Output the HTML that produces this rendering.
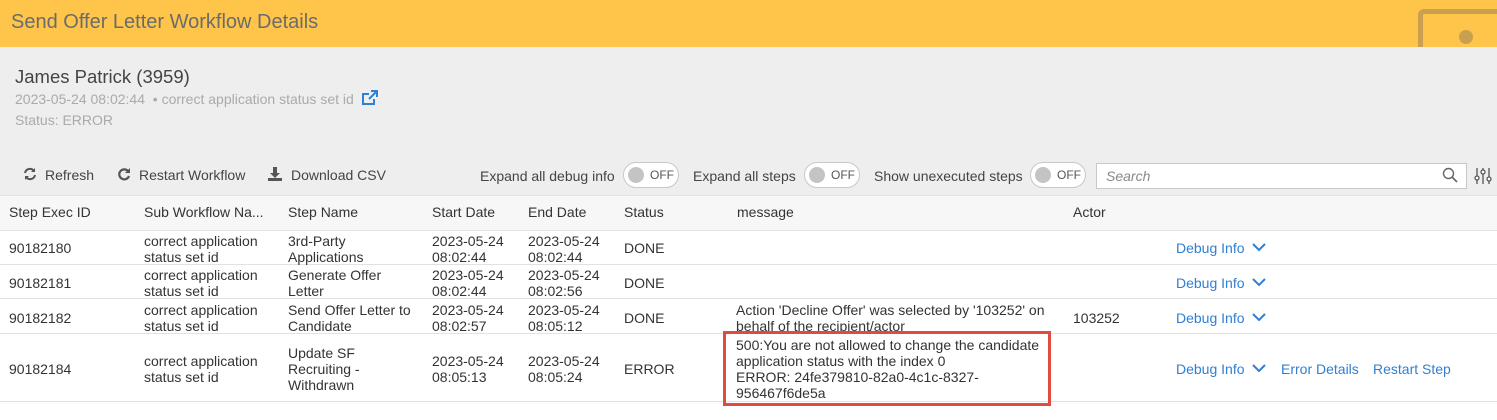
<!DOCTYPE html><html><head><style>
body{margin:0;width:1497px;height:420px;overflow:hidden;background:#fff;font-family:"Liberation Sans",Arial,sans-serif;position:relative}
.a{position:absolute;white-space:nowrap}
.hdr{position:absolute;left:0;top:0;width:1497px;height:47px;background:#ffc54a;overflow:hidden}
.gray{position:absolute;left:0;top:47px;width:1497px;height:148px;background:#eeeeee}
.th{position:absolute;left:0;top:195px;width:1497px;height:36px;background:#f7f7f7;border-top:1px solid #e2e2e2;border-bottom:1px solid #e2e2e2;box-sizing:border-box}
.t{font-size:14px;color:#333;line-height:16px}
.lnk{color:#2f7fd4;font-size:14px}
.line{position:absolute;left:0;width:1497px;height:1px;background:#e2e2e2}
.tg{position:absolute;top:162px;width:56px;height:26px;border:1px solid #c8c8c8;border-radius:14px;background:#fff;box-sizing:border-box}
.tg i{position:absolute;left:4px;top:4px;width:16px;height:16px;border-radius:50%;background:#c4c4c4}
.tg b{position:absolute;left:26px;top:5px;font-size:12px;font-weight:normal;color:#555}
</style></head><body>
<div class="hdr"><div class="a" style="left:11px;top:11px;font-size:20px;color:#6b6b6b">Send Offer Letter Workflow Details</div>
<div style="position:absolute;left:1418px;top:9px;width:100px;height:60px;border:5px solid #c9a050;border-radius:6px;box-sizing:border-box"></div>
<div style="position:absolute;left:1459px;top:30px;width:14px;height:14px;border-radius:50%;background:#c9a050"></div></div>
<div class="gray"></div>
<div class="a" style="left:15px;top:66px;font-size:18.5px;color:#444">James Patrick (3959)</div>
<div class="a" style="left:15px;top:91px;font-size:14px;color:#aaa">2023-05-24 08:02:44 &nbsp;• correct application status set id</div>
<svg class="a" style="left:361px;top:90px" width="18" height="16" viewBox="0 0 18 16"><path d="M13 9v5H2V4h6" fill="none" stroke="#2f7fd4" stroke-width="2"/><path d="M10 1h6v6M16 1L8 9" fill="none" stroke="#2f7fd4" stroke-width="2"/></svg>
<div class="a" style="left:15px;top:112px;font-size:14px;color:#aaa">Status: ERROR</div>
<svg class="a" style="left:23px;top:167px" width="14" height="14" viewBox="0 0 14 14"><path d="M2 6a5 5 0 0 1 9-2M12 8a5 5 0 0 1-9 2" fill="none" stroke="#555" stroke-width="2"/><path d="M12 1v4H8zM2 13V9h4z" fill="#555"/></svg>
<div class="a t" style="left:45px;top:167px;color:#444">Refresh</div>
<svg class="a" style="left:117px;top:167px" width="14" height="14" viewBox="0 0 14 14"><path d="M11 4a5 5 0 1 0 1 5" fill="none" stroke="#555" stroke-width="2.2"/><path d="M13 1v5H8z" fill="#555"/></svg>
<div class="a t" style="left:139px;top:167px;color:#444">Restart Workflow</div>
<svg class="a" style="left:267px;top:166px" width="16" height="16" viewBox="0 0 16 16"><path d="M6 1h4v6h3l-5 5-5-5h3z" fill="#555"/><rect x="1" y="12" width="14" height="3" fill="#555"/></svg>
<div class="a t" style="left:291px;top:167px;color:#444">Download CSV</div>
<div class="a t" style="left:480px;top:168px;color:#444">Expand all debug info</div>
<div class="tg" style="left:623px"><i></i><b>OFF</b></div>
<div class="a t" style="left:693px;top:168px;color:#444">Expand all steps</div>
<div class="tg" style="left:804px"><i></i><b>OFF</b></div>
<div class="a t" style="left:874px;top:168px;color:#444">Show unexecuted steps</div>
<div class="tg" style="left:1030px"><i></i><b>OFF</b></div>
<div style="position:absolute;left:1096px;top:163px;width:371px;height:26px;border:1px solid #c8c8c8;background:#fff;box-sizing:border-box"></div>
<div class="a" style="left:1106px;top:168px;font-size:14px;font-style:italic;color:#888">Search</div>
<svg class="a" style="left:1442px;top:167px" width="16" height="16" viewBox="0 0 16 16"><circle cx="6.5" cy="6.5" r="5" fill="none" stroke="#666" stroke-width="1.4"/><path d="M10 10l5 5" stroke="#666" stroke-width="1.6"/></svg>
<svg class="a" style="left:1474px;top:167px" width="18" height="18" viewBox="0 0 18 18" fill="none" stroke="#555" stroke-width="1.3"><path d="M3 1v16M9 1v16M15 1v16"/><circle cx="3" cy="11" r="2" fill="#fff"/><circle cx="9" cy="5" r="2" fill="#fff"/><circle cx="15" cy="12" r="2" fill="#fff"/></svg>
<div class="th"></div>
<div class="a t" style="left:9px;top:204px">Step Exec ID</div>
<div class="a t" style="left:144px;top:204px">Sub Workflow Na...</div>
<div class="a t" style="left:288px;top:204px">Step Name</div>
<div class="a t" style="left:432px;top:204px">Start Date</div>
<div class="a t" style="left:528px;top:204px">End Date</div>
<div class="a t" style="left:624px;top:204px">Status</div>
<div class="a t" style="left:737px;top:204px">message</div>
<div class="a t" style="left:1073px;top:204px">Actor</div>
<div class="line" style="top:264px"></div><div class="line" style="top:298px"></div><div class="line" style="top:333px"></div><div class="line" style="top:401px"></div>

<div class="a t" style="left:9px;top:240px">90182180</div>
<div class="a t" style="left:144px;top:233px">correct application<br>status set id</div>
<div class="a t" style="left:288px;top:233px">3rd-Party<br>Applications</div>
<div class="a t" style="left:432px;top:233px">2023-05-24<br>08:02:44</div>
<div class="a t" style="left:528px;top:233px">2023-05-24<br>08:02:44</div>
<div class="a t" style="left:624px;top:240px">DONE</div>
<div class="a lnk" style="left:1176px;top:240px">Debug Info</div>

<div class="a t" style="left:9px;top:275px">90182181</div>
<div class="a t" style="left:144px;top:267px">correct application<br>status set id</div>
<div class="a t" style="left:288px;top:267px">Generate Offer<br>Letter</div>
<div class="a t" style="left:432px;top:267px">2023-05-24<br>08:02:44</div>
<div class="a t" style="left:528px;top:267px">2023-05-24<br>08:02:56</div>
<div class="a t" style="left:624px;top:275px">DONE</div>
<div class="a lnk" style="left:1176px;top:275px">Debug Info</div>

<div class="a t" style="left:9px;top:310px">90182182</div>
<div class="a t" style="left:144px;top:302px">correct application<br>status set id</div>
<div class="a t" style="left:288px;top:302px">Send Offer Letter to<br>Candidate</div>
<div class="a t" style="left:432px;top:302px">2023-05-24<br>08:02:57</div>
<div class="a t" style="left:528px;top:302px">2023-05-24<br>08:05:12</div>
<div class="a t" style="left:624px;top:310px">DONE</div>
<div class="a t" style="left:736px;top:302px;height:29px;overflow:hidden">Action 'Decline Offer' was selected by '103252' on<br>behalf of the recipient/actor</div>
<div class="a t" style="left:1073px;top:310px">103252</div>
<div class="a lnk" style="left:1176px;top:310px">Debug Info</div>

<div class="a t" style="left:9px;top:361px">90182184</div>
<div class="a t" style="left:144px;top:353px">correct application<br>status set id</div>
<div class="a t" style="left:288px;top:345px">Update SF<br>Recruiting -<br>Withdrawn</div>
<div class="a t" style="left:432px;top:353px">2023-05-24<br>08:05:13</div>
<div class="a t" style="left:528px;top:353px">2023-05-24<br>08:05:24</div>
<div class="a t" style="left:624px;top:361px">ERROR</div>
<div class="a t" style="left:736px;top:337px">500:You are not allowed to change the candidate<br>application status with the index 0<br>ERROR: 24fe379810-82a0-4c1c-8327-<br>956467f6de5a</div>
<div style="position:absolute;left:723px;top:331px;width:328px;height:75px;border:3px solid #e04a3f;box-sizing:border-box"></div>
<div class="a lnk" style="left:1176px;top:361px">Debug Info</div>
<div class="a lnk" style="left:1281px;top:361px">Error Details</div>
<div class="a lnk" style="left:1373px;top:361px">Restart Step</div>
<svg class="a" style="left:1252px;top:242px" width="14" height="10"><path d="M1 2l6 6 6-6" fill="none" stroke="#2f7fd4" stroke-width="2"/></svg>
<svg class="a" style="left:1252px;top:277px" width="14" height="10"><path d="M1 2l6 6 6-6" fill="none" stroke="#2f7fd4" stroke-width="2"/></svg>
<svg class="a" style="left:1252px;top:312px" width="14" height="10"><path d="M1 2l6 6 6-6" fill="none" stroke="#2f7fd4" stroke-width="2"/></svg>
<svg class="a" style="left:1252px;top:363px" width="14" height="10"><path d="M1 2l6 6 6-6" fill="none" stroke="#2f7fd4" stroke-width="2"/></svg>
</body></html>
